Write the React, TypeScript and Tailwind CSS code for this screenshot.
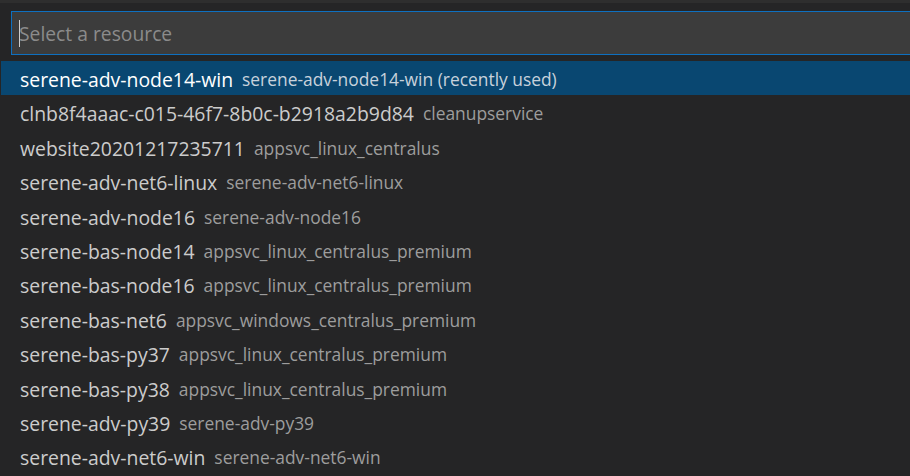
import React from "react";

const items: { label: string; desc: string }[] = [
  { label: "serene-adv-node14-win", desc: "serene-adv-node14-win (recently used)" },
  { label: "clnb8f4aaac-c015-46f7-8b0c-b2918a2b9d84", desc: "cleanupservice" },
  { label: "website20201217235711", desc: "appsvc_linux_centralus" },
  { label: "serene-adv-net6-linux", desc: "serene-adv-net6-linux" },
  { label: "serene-adv-node16", desc: "serene-adv-node16" },
  { label: "serene-bas-node14", desc: "appsvc_linux_centralus_premium" },
  { label: "serene-bas-node16", desc: "appsvc_linux_centralus_premium" },
  { label: "serene-bas-net6", desc: "appsvc_windows_centralus_premium" },
  { label: "serene-bas-py37", desc: "appsvc_linux_centralus_premium" },
  { label: "serene-bas-py38", desc: "appsvc_linux_centralus_premium" },
  { label: "serene-adv-py39", desc: "serene-adv-py39" },
  { label: "serene-adv-net6-win", desc: "serene-adv-net6-win" },
];

export default function App() {
  return (
    <div
      className="w-[910px] h-[476px] overflow-hidden bg-[#252526] flex flex-col"
      style={{ fontFamily: '"Open Sans", "Noto Sans", sans-serif' }}
    >
      <div className="h-[3px] bg-[#2e2e2e] shrink-0" />
      <div className="pl-[11px] pt-[8px] shrink-0">
        <div className="relative h-[44px] w-[920px] bg-[#3c3c3c] border border-[#0e70c0] flex items-center pl-[7px] pt-[2px]">
          <div className="absolute left-[7px] top-[8px] w-px h-[27px] bg-[#cccccc]" />
          <span className="text-[19.3px] text-[#8b8b8b] leading-none">Select a resource</span>
        </div>
      </div>
      <div className="pt-[6px] flex flex-col">
        {items.map((it, i) => (
          <div
            key={i}
            className={
              "h-[34.4px] shrink-0 flex items-center pl-[19px] pt-[3px] ml-px whitespace-nowrap " +
              (i === 0 ? "bg-[#094771]" : "")
            }
          >
            <span className={"text-[19.4px] leading-none " + (i === 0 ? "text-white" : "text-[#cccccc]")}>{it.label}</span>
            <span className={"text-[17.4px] leading-none ml-[9px] " + (i === 0 ? "text-[#c8d2dc]" : "text-[#9d9d9d]")}>{it.desc}</span>
          </div>
        ))}
      </div>
    </div>
  );
}
